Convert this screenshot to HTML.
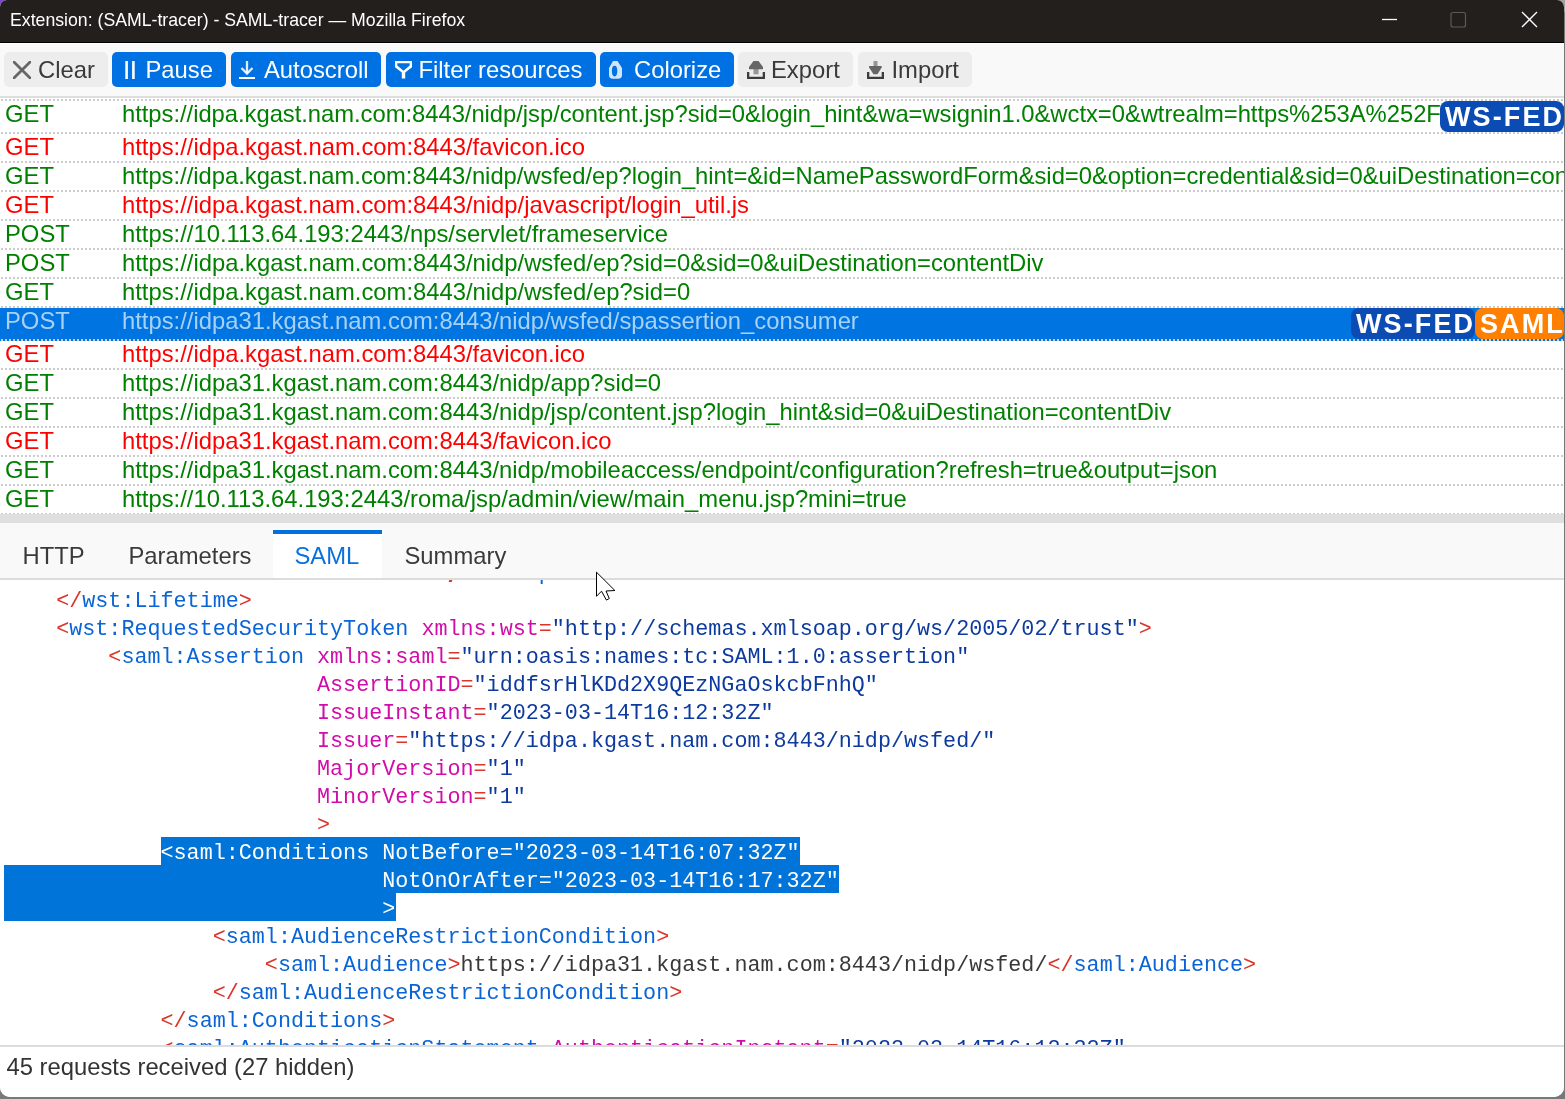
<!DOCTYPE html>
<html><head><meta charset="utf-8">
<style>
*{margin:0;padding:0;box-sizing:border-box}
html,body{width:1565px;height:1099px;overflow:hidden;background:#787878;font-family:"Liberation Sans",sans-serif}
#win{position:absolute;left:0;top:0;width:1564px;height:1097px;will-change:transform;background:#fff;border-radius:7px 7px 10px 10px;overflow:hidden}
#title{position:absolute;left:0;top:0;width:1564px;height:42px;background:#231f1c;color:#fff;font-size:17.7px}
#title .t{position:absolute;left:10px;top:10px;white-space:nowrap}
#tline{position:absolute;left:0;top:42px;width:1564px;height:1px;background:#000}
#toolbar{position:absolute;left:0;top:43px;width:1564px;height:53px;background:#f9f9f9;border-top:1px solid #fff}
#tbline{position:absolute;left:0;top:96px;width:1564px;height:2px;background:#dddddd}
.btn{position:absolute;top:52px;height:35px;border-radius:5px;background:#ededed;color:#3a3a3a;font-size:23.8px;white-space:nowrap}
.btn.b{background:#0071e3;color:#fff}
.btn span{position:absolute;top:4px}
.btn svg{position:absolute;top:9px}
#list{position:absolute;left:0;top:98px;width:1564px;height:416px;background:#fff;overflow:hidden}
.row{position:absolute;left:0;width:1564px;font-size:23.8px;white-space:nowrap;background-image:linear-gradient(to right,#ccc 2px,transparent 2px);background-size:4px 2px;background-repeat:repeat-x;background-position:1px 0}
.row .m{position:absolute;left:5px;top:1px}
.row .u{position:absolute;left:122px;top:1px}
.g{color:#008000}.r{color:#ff0000}
#selbg{position:absolute;left:0;top:210px;width:1564px;height:33px;background:#0074e0}
.s{color:#a8d1f7}
.bd{position:absolute;height:31px;border-radius:8px;font-style:normal;font-weight:bold;color:#fff;font-size:27px;line-height:31px;text-align:left;padding-left:5px;overflow:hidden}
.bd b{display:inline-block;position:relative;top:1px;letter-spacing:2.1px;font-weight:bold;filter:blur(0.35px)}
.wf{background:#0b4cb4}.saml{background:#ff8000}
#split{position:absolute;left:0;top:514px;width:1564px;height:9px;background:#dfdfdf}
#tabs{position:absolute;left:0;top:523px;width:1564px;height:55px;background:#f9f9f9;font-size:23.8px;color:#3a3a3a}
#tabs span{position:absolute;top:19px;white-space:nowrap}
#seltab{position:absolute;left:273px;top:7px;width:109px;height:48px;background:#fff;border-top:4px solid #0070e0;color:#0a6fdf}
#seltab span{top:8px !important}
#tabline{position:absolute;left:0;top:578px;width:1564px;height:2px;background:#dcdcdc}
#code{position:absolute;left:0;top:580px;width:1564px;height:465px;background:#fff;overflow:hidden}
pre{position:absolute;left:4px;top:-20px;font-family:"Liberation Mono",monospace;font-size:21.74px;line-height:28px;color:#383838}
.hl{color:#fff}
.hlb{position:absolute;background:#0074d8;height:28px}
.p{color:#d9352b}.n{color:#0a64d6}.a{color:#d10ca8}.v{color:#0d3a9e}
#status{position:absolute;left:0;top:1045px;width:1564px;height:52px;background:#fff;border-top:2px solid #dcdcdc;font-size:23.8px;color:#333}
#status span{position:absolute;left:6.5px;top:6px}
</style></head><body>
<div style="position:absolute;left:0;top:0;width:12px;height:12px;background:linear-gradient(135deg,#8a3fd0 0%,#3a6fb0 60%,#2a5a90 100%)"></div>
<div style="position:absolute;left:1550px;top:0;width:15px;height:12px;background:#a0a0a0"></div>
<div id="win">
  <div id="title"><span class="t">Extension: (SAML-tracer) - SAML-tracer — Mozilla Firefox</span></div>
  <div id="tline"></div>
  <div id="toolbar"></div>
  <div id="tbline"></div>
  <div class="btn" style="left:4px;width:104px"><span style="left:34px">Clear</span></div>
  <div class="btn b" style="left:112px;width:114px"><span style="left:33.5px">Pause</span></div>
  <div class="btn b" style="left:231px;width:150px"><span style="left:33px">Autoscroll</span></div>
  <div class="btn b" style="left:386px;width:210px"><span style="left:32.5px">Filter resources</span></div>
  <div class="btn b" style="left:600px;width:134px"><span style="left:34px">Colorize</span></div>
  <div class="btn" style="left:738px;width:115px"><span style="left:33px">Export</span></div>
  <div class="btn" style="left:858px;width:114px"><span style="left:33.5px">Import</span></div>
<svg id="icons" width="1565" height="100" style="position:absolute;left:0;top:0">
<clipPath id="xc"><rect x="13" y="61" width="18" height="18"/></clipPath><g stroke="#666" stroke-width="2.7" clip-path="url(#xc)"><line x1="11" y1="59" x2="33" y2="81"/><line x1="33" y1="59" x2="11" y2="81"/></g>
<g fill="#fff"><rect x="125.3" y="61" width="2.6" height="18"/><rect x="132.1" y="61" width="2.6" height="18"/></g>
<g fill="none" stroke="#fff" stroke-width="2.3" stroke-opacity="0.88"><line x1="247" y1="61" x2="247" y2="73"/><polyline points="241.5,68 247,73.5 252.5,68"/></g>
<rect x="239" y="77" width="16" height="2" fill="#fff"/>
<path fill="#fff" fill-rule="evenodd" d="M395,61 L412,61 L412,67.3 L405.2,72.5 L405.2,78.5 L401.8,78.5 L401.8,72.5 L395,67.3 Z M397.3,63.2 L409.7,63.2 L409.7,65.5 L403.5,70.8 L397.3,65.5 Z"/>
<path fill="#fff" fill-opacity="0.82" fill-rule="evenodd" d="M613,61 L617.5,61 L622,68 L622,75 Q622,78.8 618,78.8 L613,78.8 Q609,78.8 609,75 L609,68 Z M614.6,65.7 Q611.9,65.7 611.9,71 Q611.9,76.4 614.6,76.4 Q617.3,76.4 617.3,71 Q617.3,65.7 614.6,65.7 Z"/>
<path fill="#3c3c3c" d="M747,72 L749.3,72 L749.3,76.8 L762.7,76.8 L762.7,72 L765,72 L765,79 L747,79 Z"/>
<path fill="#969696" d="M753.5,67 L758.6,67 L758.6,74.3 L753.5,74.3 Z"/><path fill="#666" d="M753.5,61 L758.5,61 L763,67 L763,69.2 L749,69.2 L749,67 Z"/>
<path fill="#3c3c3c" d="M867,72 L869.3,72 L869.3,76.8 L881.7,76.8 L881.7,72 L884,72 L884,79 L867,79 Z"/>
<path fill="#969696" d="M873.5,61 L877.5,61 L877.5,67 L873.5,67 Z"/><path fill="#666" d="M869.1,66 L881.7,66 L881.7,67.5 L877.5,74.3 L873.5,74.3 L869.1,67.5 Z"/>
<g stroke="#fff" stroke-width="1.3" fill="none"><line x1="1382" y1="19.5" x2="1397" y2="19.5"/><line x1="1522" y1="12" x2="1537" y2="27"/><line x1="1537" y1="12" x2="1522" y2="27"/></g>
<rect x="1451" y="12.5" width="14.5" height="14.5" rx="2" fill="none" stroke="#5c5a58" stroke-width="1.2"/>
</svg>

<div id="list">
<div id="selbg"></div>
<div class="row g" style="top:1px;height:33px"><span class="m">GET</span><span class="u" style="letter-spacing:-0.035px">https://idpa.kgast.nam.com:8443/nidp/jsp/content.jsp?sid=0&amp;login_hint&amp;wa=wsignin1.0&amp;wctx=0&amp;wtrealm=https%253A%252F%252Fidpa31.kgast.nam.com</span>
<i class="bd wf" style="left:1440px;top:2px;width:124px"><b>WS-FED</b></i>
</div>
<div class="row r" style="top:34px;height:29px"><span class="m">GET</span><span class="u">https://idpa.kgast.nam.com:8443/favicon.ico</span>
</div>
<div class="row g" style="top:63px;height:29px"><span class="m">GET</span><span class="u" style="letter-spacing:-0.02px">https://idpa.kgast.nam.com:8443/nidp/wsfed/ep?login_hint=&amp;id=NamePasswordForm&amp;sid=0&amp;option=credential&amp;sid=0&amp;uiDestination=contentDiv</span>
</div>
<div class="row r" style="top:92px;height:29px"><span class="m">GET</span><span class="u">https://idpa.kgast.nam.com:8443/nidp/javascript/login_util.js</span>
</div>
<div class="row g" style="top:121px;height:29px"><span class="m">POST</span><span class="u">https://10.113.64.193:2443/nps/servlet/frameservice</span>
</div>
<div class="row g" style="top:150px;height:29px"><span class="m">POST</span><span class="u">https://idpa.kgast.nam.com:8443/nidp/wsfed/ep?sid=0&amp;sid=0&amp;uiDestination=contentDiv</span>
</div>
<div class="row g" style="top:179px;height:29px"><span class="m">GET</span><span class="u">https://idpa.kgast.nam.com:8443/nidp/wsfed/ep?sid=0</span>
</div>
<div class="row s" style="top:208px;height:33px"><span class="m">POST</span><span class="u">https://idpa31.kgast.nam.com:8443/nidp/wsfed/spassertion_consumer</span>
<i class="bd wf" style="left:1351px;top:2px;width:124px"><b>WS-FED</b></i><i class="bd saml" style="left:1475px;top:2px;width:89px"><b>SAML</b></i>
</div>
<div class="row r" style="top:241px;height:29px"><span class="m">GET</span><span class="u">https://idpa.kgast.nam.com:8443/favicon.ico</span>
</div>
<div class="row g" style="top:270px;height:29px"><span class="m">GET</span><span class="u">https://idpa31.kgast.nam.com:8443/nidp/app?sid=0</span>
</div>
<div class="row g" style="top:299px;height:29px"><span class="m">GET</span><span class="u">https://idpa31.kgast.nam.com:8443/nidp/jsp/content.jsp?login_hint&amp;sid=0&amp;uiDestination=contentDiv</span>
</div>
<div class="row r" style="top:328px;height:29px"><span class="m">GET</span><span class="u">https://idpa31.kgast.nam.com:8443/favicon.ico</span>
</div>
<div class="row g" style="top:357px;height:29px"><span class="m">GET</span><span class="u">https://idpa31.kgast.nam.com:8443/nidp/mobileaccess/endpoint/configuration?refresh=true&amp;output=json</span>
</div>
<div class="row g" style="top:386px;height:29px"><span class="m">GET</span><span class="u">https://10.113.64.193:2443/roma/jsp/admin/view/main_menu.jsp?mini=true</span>
</div>
<div class="row" style="top:415px;height:2px"></div>
</div>

  <div id="split"></div>
  <div id="tabs">
    <span style="left:22.5px">HTTP</span>
    <span style="left:128.5px">Parameters</span>
    <span style="left:404.5px">Summary</span>
    <div id="seltab"><span style="left:21.5px">SAML</span></div>
  </div>
  <div id="tabline"></div>
  <div id="code"><div style="position:absolute;left:449px;top:0;width:3px;height:2px;background:#d9352b;transform:skewX(-20deg)"></div><div class="hlb" style="left:161px;top:257px;width:639px"></div><div class="hlb" style="left:4px;top:285px;width:835px"></div><div class="hlb" style="left:4px;top:313px;width:392px"></div><pre>                                 <span class="p">&lt;/</span><span class="n">wsu:Expires</span><span class="p">&gt;</span>
    <span class="p">&lt;/</span><span class="n">wst:Lifetime</span><span class="p">&gt;</span>
    <span class="p">&lt;</span><span class="n">wst:RequestedSecurityToken</span> <span class="a">xmlns:wst</span><span class="p">=</span><span class="v">"http://schemas.xmlsoap.org/ws/2005/02/trust"</span><span class="p">&gt;</span>
        <span class="p">&lt;</span><span class="n">saml:Assertion</span> <span class="a">xmlns:saml</span><span class="p">=</span><span class="v">"urn:oasis:names:tc:SAML:1.0:assertion"</span>
                        <span class="a">AssertionID</span><span class="p">=</span><span class="v">"iddfsrHlKDd2X9QEzNGaOskcbFnhQ"</span>
                        <span class="a">IssueInstant</span><span class="p">=</span><span class="v">"2023-03-14T16:12:32Z"</span>
                        <span class="a">Issuer</span><span class="p">=</span><span class="v">"https://idpa.kgast.nam.com:8443/nidp/wsfed/"</span>
                        <span class="a">MajorVersion</span><span class="p">=</span><span class="v">"1"</span>
                        <span class="a">MinorVersion</span><span class="p">=</span><span class="v">"1"</span>
                        <span class="p">&gt;</span>
            <span class="hl">&lt;saml:Conditions NotBefore="2023-03-14T16:07:32Z"</span>
<span class="hl">                             NotOnOrAfter="2023-03-14T16:17:32Z"</span>
<span class="hl">                             &gt;</span>
                <span class="p">&lt;</span><span class="n">saml:AudienceRestrictionCondition</span><span class="p">&gt;</span>
                    <span class="p">&lt;</span><span class="n">saml:Audience</span><span class="p">&gt;</span>https://idpa31.kgast.nam.com:8443/nidp/wsfed/<span class="p">&lt;/</span><span class="n">saml:Audience</span><span class="p">&gt;</span>
                <span class="p">&lt;/</span><span class="n">saml:AudienceRestrictionCondition</span><span class="p">&gt;</span>
            <span class="p">&lt;/</span><span class="n">saml:Conditions</span><span class="p">&gt;</span>
            <span class="p">&lt;</span><span class="n">saml:AuthenticationStatement</span> <span class="a">AuthenticationInstant</span><span class="p">=</span><span class="v">"2023-03-14T16:12:32Z"</span>
</pre></div>
<svg width="30" height="40" style="position:absolute;left:590px;top:565px"><path d="M6.5,7.2 L6.5,31.3 L11.5,26.2 L16.4,35.1 L19.3,33.5 L16,26 L24.9,25.5 Z" fill="#fff" stroke="#000" stroke-width="1" stroke-linejoin="miter"/></svg>
  <div id="status"><span>45 requests received (27 hidden)</span></div>
</div>
</body></html>
